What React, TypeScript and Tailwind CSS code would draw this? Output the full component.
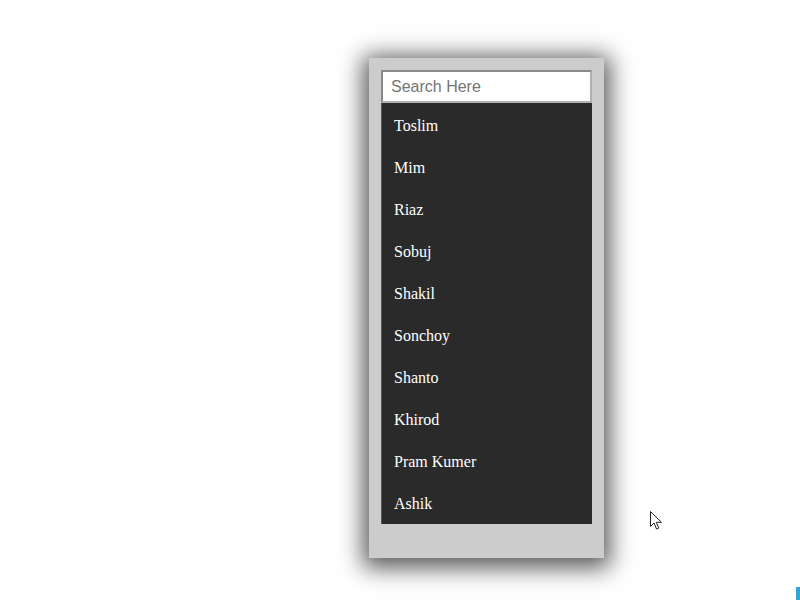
const names = [
  "Toslim",
  "Mim",
  "Riaz",
  "Sobuj",
  "Shakil",
  "Sonchoy",
  "Shanto",
  "Khirod",
  "Pram Kumer",
  "Ashik",
];

export default function App() {
  return (
    <div className="relative w-[800px] h-[600px] bg-white overflow-hidden">
      <div className="flex pt-[58px] pl-[369px]">
        <div className="w-[235px] h-[500px] bg-[#cccccc] pt-3 pl-3 pr-3 shadow-[0_4px_22px_6px_rgba(0,0,0,0.65)]">
          <input
            type="text"
            placeholder="Search Here"
            className="block w-full h-[33px] bg-white px-2 text-[16px] text-[#333] placeholder:text-[#757575] border-2 border-t-[#8a8a8a] border-l-[#8a8a8a] border-r-[#b0b0b0] border-b-[#b0b0b0] outline-none"
            style={{ fontFamily: '"Liberation Sans", Arial, sans-serif' }}
          />
          <ul className="bg-[#2a2a2a] border-l border-[#555] pb-px">
            {names.map((name) => (
              <li
                key={name}
                className="h-[42px] flex items-center pl-3 pt-[3px] text-white text-[16px]"
                style={{ fontFamily: '"Liberation Serif", "Times New Roman", serif' }}
              >
                {name}
              </li>
            ))}
          </ul>
        </div>
      </div>

      {/* mouse cursor */}
      <svg
        className="absolute left-[650px] top-[511px]"
        width="14"
        height="20"
        viewBox="0 0 14 20"
      >
        <path
          d="M0.5 0.5 L0.5 15.5 L4 12 L6.5 18 L8.8 17 L6.3 11.3 L11.5 11.3 Z"
          fill="white"
          stroke="#222"
          strokeWidth="1"
          strokeLinejoin="round"
        />
      </svg>

      {/* corner mark */}
      <div className="absolute left-[796px] top-[587px] w-[4px] h-[13px] bg-[#2ea8d6]" />
    </div>
  );
}
